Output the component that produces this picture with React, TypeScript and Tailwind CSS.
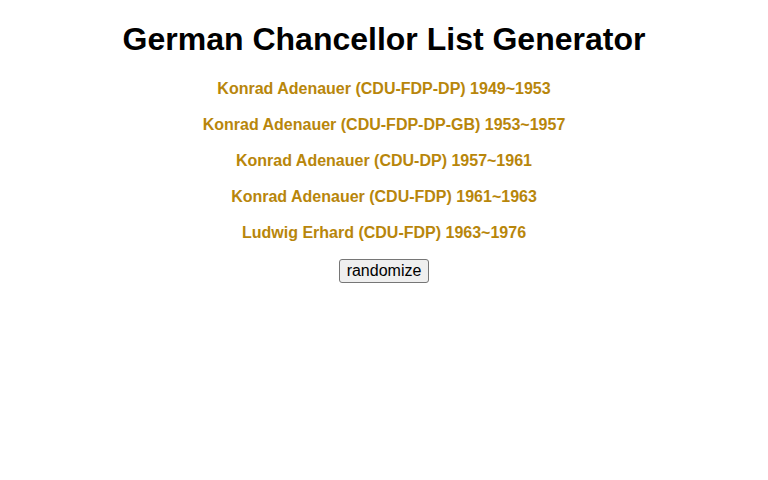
import React, { useState } from 'react';

const initial = [
  'Konrad Adenauer (CDU-FDP-DP) 1949~1953',
  'Konrad Adenauer (CDU-FDP-DP-GB) 1953~1957',
  'Konrad Adenauer (CDU-DP) 1957~1961',
  'Konrad Adenauer (CDU-FDP) 1961~1963',
  'Ludwig Erhard (CDU-FDP) 1963~1976',
];

const App: React.FC = () => {
  const [list, setList] = useState(initial);

  const randomize = () => {
    setList([...list].sort(() => Math.random() - 0.5));
  };

  return (
    <div className="min-h-[480px] bg-white text-center font-['Liberation_Sans',Arial,sans-serif] text-black">
      <div className="flex flex-col items-center pt-[21px]">
        <h1 className="text-[32px] leading-[37px] font-bold">German Chancellor List Generator</h1>
        <div className="mt-[21px] flex flex-col gap-4">
          {list.map((item) => (
            <p key={item} className="text-base leading-5 font-bold text-[#b8860b]">
              {item}
            </p>
          ))}
        </div>
        <button
          onClick={randomize}
          className="mt-4 h-6 px-[7px] text-base leading-[18px] bg-[#efefef] border border-[#767676] rounded-[3px] text-black"
        >
          randomize
        </button>
      </div>
    </div>
  );
};

export default App;
